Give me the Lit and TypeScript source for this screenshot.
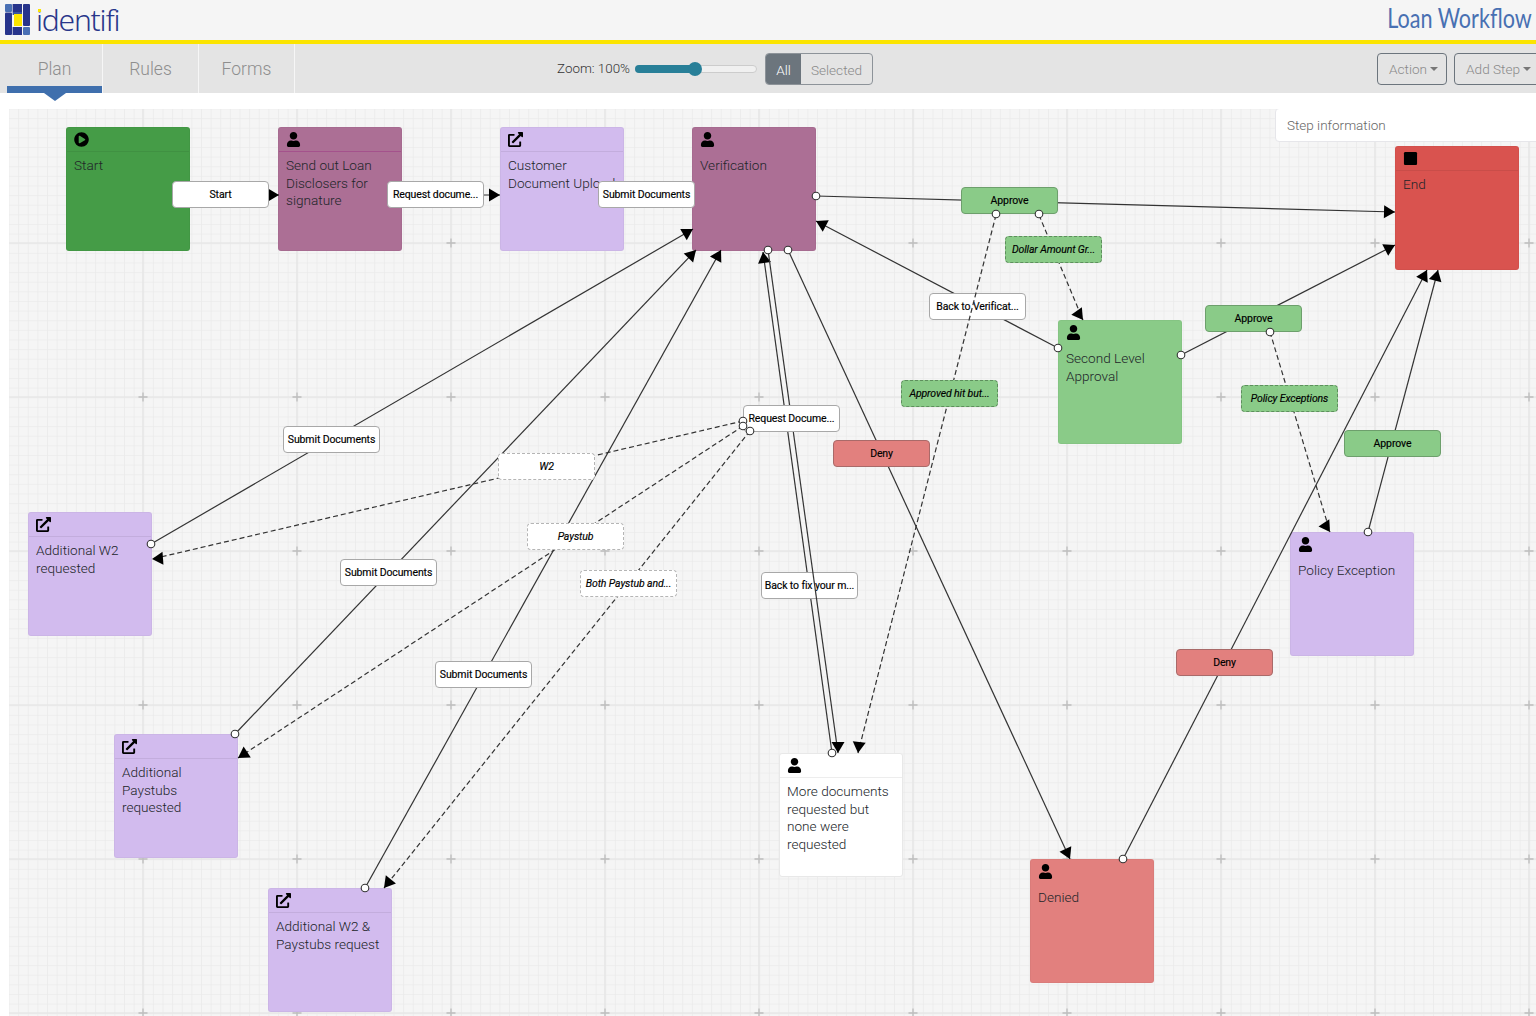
import { LitElement, html, css, svg } from "lit";
import { customElement } from "lit/decorators.js";

const OX = 9;
const OY = 109;

type Kind = "green" | "plum" | "lav" | "red" | "lime" | "white" | "rose";
type Icon = "play" | "user" | "ext" | "stop";

interface WfNode { x: number; y: number; kind: Kind; icon: Icon; lines: string[]; flat?: boolean; }
interface WfLink {
  from: [number, number];
  to: [number, number];
  dashed?: boolean;
  tilt?: number;
  label: string;
  lx: number;
  ly: number;
  tone: "plain" | "ok" | "bad" | "cond-ok" | "cond";
}

const NODES: WfNode[] = [
  { x: 66, y: 127, kind: "green", icon: "play", lines: ["Start"] },
  { x: 278, y: 127, kind: "plum", icon: "user", lines: ["Send out Loan", "Disclosers for", "signature"] },
  { x: 500, y: 127, kind: "lav", icon: "ext", lines: ["Customer", "Document Upload"] },
  { x: 692, y: 127, kind: "plum", icon: "user", lines: ["Verification"], flat: true },
  { x: 1395, y: 146, kind: "red", icon: "stop", lines: ["End"] },
  { x: 1058, y: 320, kind: "lime", icon: "user", lines: ["Second Level", "Approval"], flat: true },
  { x: 28, y: 512, kind: "lav", icon: "ext", lines: ["Additional W2", "requested"] },
  { x: 114, y: 734, kind: "lav", icon: "ext", lines: ["Additional", "Paystubs", "requested"] },
  { x: 268, y: 888, kind: "lav", icon: "ext", lines: ["Additional W2 &", "Paystubs request"] },
  { x: 779, y: 753, kind: "white", icon: "user", lines: ["More documents", "requested but", "none were", "requested"] },
  { x: 1030, y: 859, kind: "rose", icon: "user", lines: ["Denied"], flat: true },
  { x: 1290, y: 532, kind: "lav", icon: "user", lines: ["Policy Exception"], flat: true },
];

const LINKS: WfLink[] = [
  { from: [220, 195], to: [279, 195], label: "Start", lx: 172, ly: 181, tone: "plain" },
  { from: [435, 195], to: [500, 195], label: "Request docume...", lx: 387, ly: 181, tone: "plain" },
  { from: [623, 195], to: [692, 195], label: "Submit Documents", lx: 598, ly: 181, tone: "plain" },
  { from: [151, 544], to: [693, 229], label: "Submit Documents", lx: 283, ly: 426, tone: "plain" },
  { from: [235, 734], to: [696, 250], label: "Submit Documents", lx: 340, ly: 559, tone: "plain" },
  { from: [365, 888], to: [721, 250], label: "Submit Documents", lx: 435, ly: 661, tone: "plain" },
  { from: [832, 753], to: [763, 252], label: "Back to fix your m...", lx: 761, ly: 572, tone: "plain" },
  { from: [768, 250], to: [838, 753], tilt: 8, label: "Request Docume...", lx: 743, ly: 405, tone: "plain" },
  { from: [788, 250], to: [1070, 859], label: "Deny", lx: 833, ly: 440, tone: "bad" },
  { from: [1058, 348], to: [816, 221], label: "Back to Verificat...", lx: 929, ly: 293, tone: "plain" },
  { from: [816, 196], to: [1395, 212], label: "Approve", lx: 961, ly: 187, tone: "ok" },
  { from: [996, 215], to: [858, 753], dashed: true, tilt: -8, label: "Approved hit but...", lx: 901, ly: 380, tone: "cond-ok" },
  { from: [1039, 215], to: [1083, 320], dashed: true, tilt: -13, label: "Dollar Amount Gr...", lx: 1005, ly: 236, tone: "cond-ok" },
  { from: [1181, 355], to: [1395, 245], label: "Approve", lx: 1205, ly: 305, tone: "ok" },
  { from: [1270, 332], to: [1330, 532], dashed: true, tilt: -17, label: "Policy Exceptions", lx: 1241, ly: 385, tone: "cond-ok" },
  { from: [1368, 532], to: [1438, 270], label: "Approve", lx: 1344, ly: 430, tone: "ok" },
  { from: [1123, 859], to: [1427, 270], label: "Deny", lx: 1176, ly: 649, tone: "bad" },
  { from: [743, 421], to: [152, 559], dashed: true, tilt: 9, label: "W2", lx: 498, ly: 453, tone: "cond" },
  { from: [743, 426], to: [238, 758], dashed: true, label: "Paystub", lx: 527, ly: 523, tone: "cond" },
  { from: [750, 431], to: [384, 888], dashed: true, label: "Both Paystub and...", lx: 580, ly: 570, tone: "cond" },
];

const PORTS: [number, number][] = [
  [816, 196], [996, 214], [1039, 214], [1058, 348], [1181, 355], [1270, 332], [1368, 532],
  [1123, 859], [768, 250], [788, 250], [151, 544], [235, 734], [365, 888], [743, 421],
  [743, 426], [750, 431], [832, 753],
];

const ICONS: Record<Icon, { vb: string; d: string }> = {
  play: { vb: "0 0 512 512", d: "M256 8C119 8 8 119 8 256s111 248 248 248 248-111 248-248S393 8 256 8zm115.7 272l-176 101c-15.8 8.8-35.7-2.5-35.7-21V152c0-18.4 19.8-29.8 35.7-21l176 107c16.4 9.2 16.4 32.9 0 42z" },
  user: { vb: "0 0 448 512", d: "M224 256c70.7 0 128-57.3 128-128S294.7 0 224 0 96 57.3 96 128s57.3 128 128 128zm89.6 32h-16.7c-22.2 10.2-46.9 16-72.9 16s-50.6-5.8-72.9-16h-16.7C60.2 288 0 348.2 0 422.4V464c0 26.5 21.5 48 48 48h352c26.5 0 48-21.5 48-48v-41.6c0-74.2-60.2-134.4-134.4-134.4z" },
  ext: { vb: "0 0 512 512", d: "M432 320h-32a16 16 0 0 0-16 16v112H64V128h144a16 16 0 0 0 16-16V80a16 16 0 0 0-16-16H48a48 48 0 0 0-48 48v352a48 48 0 0 0 48 48h352a48 48 0 0 0 48-48V336a16 16 0 0 0-16-16zM488 0H360c-21.37 0-32.05 25.91-17 41l35.73 35.73L135 320.37a24 24 0 0 0 0 34L157.67 377a24 24 0 0 0 34 0l243.61-243.68L471 169c15 15 41 4.5 41-17V24a24 24 0 0 0-24-24z" },
  stop: { vb: "0 0 448 512", d: "M400 32H48C21.5 32 0 53.5 0 80v352c0 26.5 21.5 48 48 48h352c26.5 0 48-21.5 48-48V80c0-26.5-21.5-48-48-48z" },
};

function arrowPoints(a: [number, number], b: [number, number], tilt = 0): string {
  const dx = b[0] - a[0];
  const dy = b[1] - a[1];
  const len = Math.hypot(dx, dy) || 1;
  const ux = dx / len;
  const uy = dy / len;
  const L = 11;
  const W = 6.5;
  const t = (tilt * Math.PI) / 180;
  const rot = (x: number, y: number) => [x * Math.cos(t) - y * Math.sin(t), x * Math.sin(t) + y * Math.cos(t)];
  const [p1x, p1y] = rot(-ux * L - uy * W, -uy * L + ux * W);
  const [p2x, p2y] = rot(-ux * L + uy * W, -uy * L - ux * W);
  const tx = b[0] - OX;
  const ty = b[1] - OY;
  return `${tx},${ty} ${tx + p1x},${ty + p1y} ${tx + p2x},${ty + p2y}`;
}

@customElement("app-root")
export class AppRoot extends LitElement {
  static styles = css`
    :host {
      display: flex;
      flex-direction: column;
      width: 1536px;
      height: 1016px;
      overflow: hidden;
      background: #fff;
      font-family: Roboto, "Liberation Sans", sans-serif;
      color: #212529;
    }
    .top {
      height: 40px;
      flex: none;
      background: #f5f5f5;
      border-bottom: 4px solid #fbe400;
      display: flex;
      align-items: center;
      justify-content: space-between;
      padding: 0 4px 0 5px;
    }
    .brand { display: flex; align-items: center; gap: 6px; }
    .brand svg { width: 25px; height: 31px; display: block; margin-top: -1px; }
    .brand span {
      position: relative;
      font-family: "Noto Sans", sans-serif;
      font-weight: 300;
      font-size: 30px;
      letter-spacing: -1.2px;
      line-height: 40px;
      color: #28368a;
    }
    .brand span::before {
      content: "";
      position: absolute;
      left: 2px;
      top: 9px;
      width: 3px;
      height: 3px;
      background: #fbe400;
    }
    .title {
      font-family: Lato, sans-serif;
      font-size: 27px;
      line-height: 36px;
      margin-bottom: 4px;
      color: #4870b2;
      transform: scaleX(0.8);
      transform-origin: right center;
    }
    .bar {
      height: 49px;
      flex: none;
      background: #e4e4e4;
      display: flex;
      align-items: center;
      padding-left: 7px;
    }
    .tabs { display: flex; height: 49px; }
    .tab {
      position: relative;
      width: 95px;
      border-right: 1px solid #f6f6f6;
      font-size: 17.5px;
      font-weight: 300;
      color: #8e8e8e;
      text-align: center;
      line-height: 50px;
    }
    .tab.active { box-shadow: inset 0 -7px 0 #3f6fad; }
    .tab.active::after {
      content: "";
      position: absolute;
      left: 37px;
      top: 49px;
      border-left: 11px solid transparent;
      border-right: 11px solid transparent;
      border-top: 8px solid #3f6fad;
    }
    .zoom {
      margin-left: 262px;
      display: flex;
      align-items: center;
      font-size: 13.4px;
      font-weight: 300;
      color: #333;
    }
    .zoom-text { margin-top: -1px; }
    .track {
      margin-left: 5px;
      position: relative;
      width: 122px;
      height: 8px;
      box-sizing: border-box;
      border: 1px solid #ccc;
      border-radius: 4px;
      background: #f0f0f0;
    }
    .fill {
      position: absolute;
      left: -1px;
      top: -1px;
      height: 8px;
      width: 60px;
      background: #287f98;
      border-radius: 4px;
    }
    .thumb {
      position: absolute;
      left: 52px;
      top: -4px;
      width: 14px;
      height: 14px;
      border-radius: 50%;
      background: #287f98;
    }
    .seg {
      margin: 1px 0 0 8px;
      display: flex;
      height: 32px;
      box-sizing: border-box;
      border: 1px solid #8d9399;
      border-radius: 4px;
      overflow: hidden;
      font-size: 13.6px;
      font-weight: 300;
      line-height: 32px;
      color: #8a8a8a;
    }
    .seg .on { width: 35px; background: #6c757d; color: #fff; text-align: center; }
    .seg .off { width: 71px; text-align: center; }
    .actions { margin: 1px -4px 0 auto; display: flex; gap: 7px; }
    .btn {
      height: 32px;
      box-sizing: border-box;
      border: 1px solid #6c757d;
      border-radius: 4px;
      padding: 0 8px 0 11px;
      display: flex;
      align-items: center;
      gap: 3px;
      font-size: 13.6px;
      font-weight: 300;
      color: #8a8a8a;
    }
    .caret {
      border-left: 4px solid transparent;
      border-right: 4px solid transparent;
      border-top: 4.5px solid #777;
    }
    .canvas {
      position: relative;
      flex: 1;
      margin: 16px 0 0 9px;
      background: #f5f5f5;
      overflow: hidden;
    }
    .grid, .link, .ports {
      position: absolute;
      left: 0;
      top: 0;
      width: 1527px;
      height: 907px;
      pointer-events: none;
    }
    .node {
      position: absolute;
      width: 123.5px;
      height: 123.5px;
      box-sizing: border-box;
      border-radius: 3px;
      border: 1px solid rgba(0, 0, 0, 0.03);
      font-size: 13.6px;
      font-weight: 300;
      line-height: 17.5px;
    }
    .node .head {
      height: 24px;
      box-sizing: border-box;
      padding: 4px 0 0 6.5px;
      border-bottom: 1px solid rgba(0, 0, 0, 0.07);
    }
    .node.flat .head { border-bottom-color: transparent; }
    .node .head svg { display: block; width: 15px; height: 15px; fill: #000; fill-rule: evenodd; }
    .node .body { padding: 5px 7px; white-space: nowrap; }
    .green { background: #459c47; }
    .plum { background: #ac6f95; }
    .plum .head { border-bottom-color: #a4528c; }
    .lav { background: #d2bbee; }
    .red { background: #d9534f; }
    .lime { background: #8acb88; }
    .white { background: #fff; border-color: #e8e8e8; }
    .rose { background: #e2807e; }
    .label {
      position: absolute;
      width: 97px;
      height: 27px;
      box-sizing: border-box;
      border: 1px solid #a8a8a8;
      border-radius: 4px;
      font-size: 10.5px;
      line-height: 26px;
      text-align: center;
      white-space: nowrap;
      overflow: hidden;
      color: #000;
      background: #fff;
      letter-spacing: -0.12px;
      -webkit-text-stroke: 0.15px #000;
    }
    .label.ok { background: #8acb88; border-color: #6d9f6c; }
    .label.bad { background: #e2807e; border-color: #a96a69; }
    .label.cond-ok { background: #8acb88; border: 1px dashed #5e8f5d; font-style: italic; }
    .label.cond { background: #fff; border: 1px dashed #b5b5b5; font-style: italic; }
    .step {
      position: absolute;
      left: 1266px;
      top: -1px;
      width: 280px;
      height: 34px;
      box-sizing: border-box;
      background: #fff;
      border: 1px solid #e6e6ea;
      border-radius: 4px;
      padding-left: 11px;
      font-size: 13.5px;
      font-weight: 300;
      line-height: 32px;
      color: #666;
    }
  `;

  private icon(name: Icon) {
    const i = ICONS[name];
    return html`<svg viewBox=${i.vb}><path d=${i.d}></path></svg>`;
  }

  private renderLink(l: WfLink) {
    const [x1, y1] = l.from;
    const [x2, y2] = l.to;
    return html`
      <svg class="link" viewBox="0 0 1527 907">
        ${svg`<line x1=${x1 - OX} y1=${y1 - OY} x2=${x2 - OX} y2=${y2 - OY}
          stroke="#333" stroke-width="1.2" stroke-dasharray=${l.dashed ? "5 3" : "none"}></line>
        <polygon points=${arrowPoints(l.from, l.to, l.tilt ?? 0)} fill="#000"></polygon>`}
      </svg>
      <div class="label ${l.tone}" style="left:${l.lx - OX}px;top:${l.ly - OY}px">${l.label}</div>
    `;
  }

  render() {
    return html`
      <header class="top">
        <div class="brand">
          <svg viewBox="0 0 25 31">
            <rect x="0" y="0" width="7" height="8" rx="1" fill="#4a70b4"></rect>
            <rect x="0" y="8.6" width="7" height="22.4" rx="1" fill="#27348b"></rect>
            <rect x="7.6" y="0" width="9.4" height="8" fill="#27348b"></rect>
            <rect x="7.6" y="8" width="9.4" height="3" fill="#3a55a2"></rect>
            <rect x="9" y="10" width="8" height="12" fill="#fbe400"></rect>
            <rect x="7.6" y="23" width="9.4" height="8" fill="#27348b"></rect>
            <rect x="18" y="0" width="7" height="22" rx="1" fill="#27348b"></rect>
            <rect x="18" y="23" width="7" height="8" rx="1" fill="#4a70b4"></rect>
          </svg>
          <span>identifi</span>
        </div>
        <div class="title">Loan Workflow</div>
      </header>
      <nav class="bar">
        <div class="tabs">
          <div class="tab active">Plan</div>
          <div class="tab">Rules</div>
          <div class="tab">Forms</div>
        </div>
        <div class="zoom">
          <span class="zoom-text">Zoom: 100%</span>
          <div class="track"><div class="fill"></div><div class="thumb"></div></div>
          <div class="seg"><div class="on">All</div><div class="off">Selected</div></div>
        </div>
        <div class="actions">
          <div class="btn">Action<span class="caret"></span></div>
          <div class="btn">Add Step<span class="caret"></span></div>
        </div>
      </nav>
      <main class="canvas">
        <svg class="grid" viewBox="0 0 1527 907">
          <defs>
            <pattern id="minor" width="9.625" height="9.625" patternUnits="userSpaceOnUse" x="-0.5" y="-0.5">
              <path d="M0 0H9.625M0 0V9.625" stroke="#ebebeb" stroke-width="1.6" fill="none"></path>
            </pattern>
            <pattern id="major" width="154" height="154" patternUnits="userSpaceOnUse" x="134" y="134" patternTransform="translate(-77 -77)">
              <path d="M77 0V154M0 77H154" stroke="#e7e7e7" stroke-width="1.6" fill="none"></path>
              <path d="M72.5 77H81.5M77 72.5V81.5" stroke="#bdbdbd" stroke-width="1.3" fill="none"></path>
            </pattern>
          </defs>
          <rect width="1527" height="907" fill="url(#minor)"></rect>
          <rect width="1527" height="907" fill="url(#major)"></rect>
        </svg>
        ${NODES.map(
          (n) => html`
            <div class="node ${n.kind} ${n.flat ? "flat" : ""}" style="left:${n.x - OX}px;top:${n.y - OY}px">
              <div class="head">${this.icon(n.icon)}</div>
              <div class="body">${n.lines.map((t) => html`<div>${t}</div>`)}</div>
            </div>
          `
        )}
        ${LINKS.map((l) => this.renderLink(l))}
        <svg class="ports" viewBox="0 0 1527 907">
          ${PORTS.map(
            ([x, y]) => svg`<circle cx=${x - OX} cy=${y - OY} r="3.8" fill="#fff" stroke="#333" stroke-width="1.1"></circle>`
          )}
        </svg>
        <div class="step">Step information</div>
      </main>
    `;
  }
}
